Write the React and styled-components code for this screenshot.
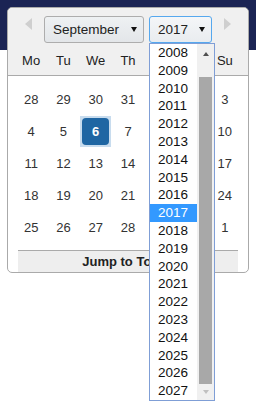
import React from 'react';
import styled, { createGlobalStyle } from 'styled-components';

const GlobalStyle = createGlobalStyle`
  html, body {
    margin: 0;
    padding: 0;
  }
  body {
    font-family: "Liberation Sans", Arial, sans-serif;
    background: #fff;
  }
`;

const Page = styled.div`
  position: relative;
  width: 256px;
  height: 414px;
  overflow: hidden;
`;

const TopBand = styled.div`
  height: 50px;
  background: #1b2454;
`;

const Picker = styled.div`
  position: absolute;
  top: 7px;
  left: 7px;
  width: 240px;
  border: 1px solid #aaa;
  border-radius: 5px;
  background: #fff;
`;

const Header = styled.div`
  background: #f0f0f0;
  border-bottom: 1px solid #aaa;
  border-radius: 5px 5px 0 0;
  padding: 8px 7px 5px;
`;

const NavRow = styled.div`
  display: flex;
  justify-content: center;
  align-items: flex-start;
  height: 27px;
`;

const NavArrow = styled.span`
  width: 0;
  height: 0;
  margin-top: 2px;
  border-top: 6px solid transparent;
  border-bottom: 6px solid transparent;
  ${(p) =>
    p.$dir === 'prev'
      ? 'border-right: 7px solid #cfcfcf; margin-right: 12px;'
      : 'border-left: 7px solid #cfcfcf; margin-left: 12px;'}
`;

const SelectBox = styled.div`
  position: relative;
  box-sizing: border-box;
  width: ${(p) => p.$width}px;
  height: 27px;
  margin-left: ${(p) => p.$gap || 0}px;
  display: flex;
  align-items: center;
  justify-content: space-between;
  padding: 0 6px 0 8px;
  border: 1px solid ${(p) => (p.$focused ? '#56a8ee' : '#adadad')};
  border-radius: 3px;
  background: ${(p) =>
    p.$focused
      ? 'linear-gradient(#f4f6f8, #e9ecef)'
      : 'linear-gradient(#eef1f3, #e3e6e9)'};
  font-size: 13.5px;
  color: #222;
`;

const Caret = styled.span`
  width: 0;
  height: 0;
  border-left: 3px solid transparent;
  border-right: 3px solid transparent;
  border-top: 5px solid #111;
`;

const WeekRow = styled.div`
  display: grid;
  grid-template-columns: repeat(7, 1fr);
  margin-top: 7px;
  height: 20px;
  align-items: center;
  text-align: center;
  font-size: 13px;
  color: #222;
`;

const Body = styled.div`
  padding: 7px 7px 0;
`;

const DayGrid = styled.div`
  display: grid;
  grid-template-columns: repeat(7, 1fr);
  grid-auto-rows: 32px;
  font-size: 13px;
  color: #333;
`;

const DayCell = styled.div`
  display: flex;
  align-items: center;
  justify-content: center;
`;

const SelectedOuter = styled.span`
  box-sizing: border-box;
  width: 31px;
  height: 31px;
  padding: 2px;
  background: #c8dcee;
`;

const SelectedInner = styled.span`
  display: flex;
  align-items: center;
  justify-content: center;
  width: 100%;
  height: 100%;
  border-radius: 4px;
  background: #1f66a3;
  color: #fff;
  font-weight: bold;
`;

const TodayButton = styled.div`
  box-sizing: border-box;
  margin: 7px 10px 0;
  height: 22px;
  display: flex;
  align-items: center;
  justify-content: center;
  background: #eee;
  border-top: 1px solid #aaa;
  font-size: 13px;
  font-weight: bold;
  color: #222;
`;

const YearMenu = styled.div`
  position: absolute;
  top: 26px;
  left: -1px;
  width: 64px;
  display: flex;
  border: 1px solid #7f9ed6;
  background: #fff;
  z-index: 2;
`;

const YearList = styled.div`
  flex: 1;
  display: flex;
  flex-direction: column;
`;

const YearItem = styled.div`
  height: 17.8px;
  line-height: 17.8px;
  padding-left: 8px;
  font-size: 13.5px;
  color: ${(p) => (p.$active ? '#fff' : '#111')};
  background: ${(p) => (p.$active ? '#3399ff' : 'transparent')};
`;

const ScrollTrack = styled.div`
  width: 17px;
  display: flex;
  flex-direction: column;
  background: #f0f0f0;
`;

const ScrollButton = styled.div`
  height: ${(p) => p.$h}px;
  display: flex;
  align-items: center;
  justify-content: center;
`;

const ScrollTri = styled.span`
  width: 0;
  height: 0;
  border-left: 3px solid transparent;
  border-right: 3px solid transparent;
  ${(p) =>
    p.$up
      ? 'border-bottom: 4px solid #505050; margin-top: 3px;'
      : 'border-top: 4px solid #c0c0c0;'}
`;

const ScrollThumb = styled.div`
  flex: 1;
  margin: 16px 2px 0;
  background: #a8a8a8;
`;

const weekdays = ['Mo', 'Tu', 'We', 'Th', 'Fr', 'Sa', 'Su'];

const days = [
  28, 29, 30, 31, 1, 2, 3,
  4, 5, 6, 7, 8, 9, 10,
  11, 12, 13, 14, 15, 16, 17,
  18, 19, 20, 21, 22, 23, 24,
  25, 26, 27, 28, 29, 30, 1,
];

const years = Array.from({ length: 20 }, (_, i) => 2008 + i);

const App = () => {
  return (
    <Page>
      <GlobalStyle />
      <TopBand />
      <Picker>
        <Header>
          <NavRow>
            <NavArrow $dir="prev" />
            <SelectBox $width={100}>
              September
              <Caret />
            </SelectBox>
            <SelectBox $width={63} $gap={5} $focused>
              2017
              <Caret />
              <YearMenu>
                <YearList>
                  {years.map((y) => (
                    <YearItem key={y} $active={y === 2017}>
                      {y}
                    </YearItem>
                  ))}
                </YearList>
                <ScrollTrack>
                  <ScrollButton $h={17}>
                    <ScrollTri $up />
                  </ScrollButton>
                  <ScrollThumb />
                  <ScrollButton $h={16}>
                    <ScrollTri />
                  </ScrollButton>
                </ScrollTrack>
              </YearMenu>
            </SelectBox>
            <NavArrow $dir="next" />
          </NavRow>
          <WeekRow>
            {weekdays.map((d) => (
              <span key={d}>{d}</span>
            ))}
          </WeekRow>
        </Header>
        <Body>
          <DayGrid>
            {days.map((d, i) => (
              <DayCell key={i}>
                {i === 9 ? (
                  <SelectedOuter>
                    <SelectedInner>{d}</SelectedInner>
                  </SelectedOuter>
                ) : (
                  d
                )}
              </DayCell>
            ))}
          </DayGrid>
        </Body>
        <TodayButton>Jump to Today</TodayButton>
      </Picker>
    </Page>
  );
};

export default App;
